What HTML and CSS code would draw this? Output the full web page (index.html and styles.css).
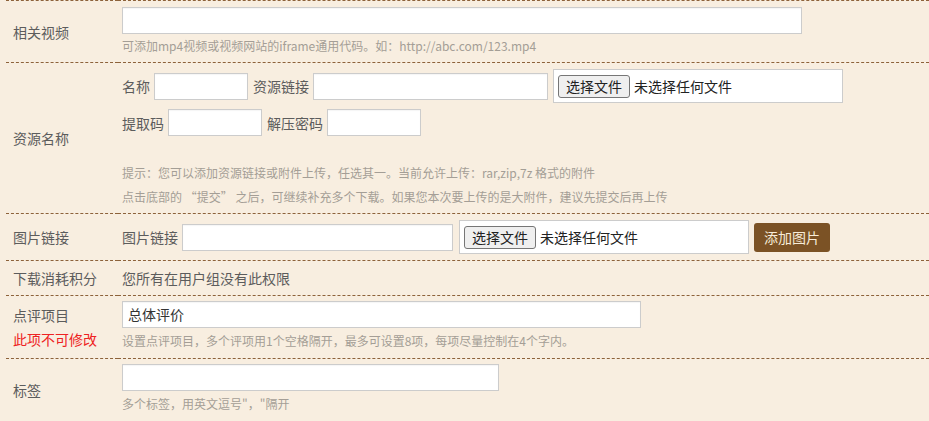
FILE: index.html
```html
<!DOCTYPE html>
<html lang="zh-CN">
<head>
<meta charset="utf-8">
<title>发布</title>
<link rel="stylesheet" href="styles.css">
</head>
<body>
<div class="form">
  <div class="row row-top"><div class="lab"></div><div class="cnt"></div></div>

  <div class="row r1">
    <div class="lab">相关视频</div>
    <div class="cnt">
      <div class="inp w680"></div>
      <div class="hint">可添加mp4视频或视频网站的iframe通用代码。如：http://abc.com/123.mp4</div>
    </div>
  </div>

  <div class="row r2">
    <div class="lab">资源名称</div>
    <div class="cnt">
      <div class="line l1">
        <span class="t">名称</span><div class="inp w94"></div>
        <span class="t sp">资源链接</span><div class="inp w235"></div>
        <div class="file sp"><span class="fbtn">选择文件</span><span class="ftxt">未选择任何文件</span></div>
      </div>
      <div class="line l2">
        <span class="t">提取码</span><div class="inp w94"></div>
        <span class="t sp5">解压密码</span><div class="inp w94"></div>
      </div>
      <div class="hint big h1">提示：您可以添加资源链接或附件上传，任选其一。当前允许上传：rar,zip,7z 格式的附件</div>
      <div class="hint big">点击底部的 “提交” 之后，可继续补充多个下载。如果您本次要上传的是大附件，建议先提交后再上传</div>
    </div>
  </div>

  <div class="row r3">
    <div class="lab">图片链接</div>
    <div class="cnt">
      <div class="line l1">
        <span class="t">图片链接</span><div class="inp w271"></div>
        <div class="file sp6"><span class="fbtn">选择文件</span><span class="ftxt">未选择任何文件</span></div>
        <span class="addbtn">添加图片</span>
      </div>
    </div>
  </div>

  <div class="row r4">
    <div class="lab">下载消耗积分</div>
    <div class="cnt"><span class="t">您所有在用户组没有此权限</span></div>
  </div>

  <div class="row r5">
    <div class="lab lab2"><span>点评项目</span><span class="red">此项不可修改</span></div>
    <div class="cnt">
      <div class="inp w519"><span class="val">总体评价</span></div>
      <div class="hint">设置点评项目，多个评项用1个空格隔开，最多可设置8项，每项尽量控制在4个字内。</div>
    </div>
  </div>

  <div class="row r6">
    <div class="lab">标签</div>
    <div class="cnt">
      <div class="inp w377"></div>
      <div class="hint">多个标签，用英文逗号"，"隔开</div>
    </div>
  </div>
</div>
</body>
</html>
```

FILE: styles.css
```css
html, body {
  margin: 0;
  padding: 0;
  background: #f8eee0;
}
body {
  font-family: "Microsoft YaHei", "Noto Sans CJK SC", "Noto Sans", sans-serif;
  font-size: 14px;
  color: #5c5c5c;
  overflow: hidden;
}
.form {
  padding-left: 6px;
}
.row {
  display: flex;
}
.lab {
  width: 112px;
  flex: none;
  box-sizing: border-box;
  padding-left: 7px;
  border-bottom: 1px dashed #8d623a;
  display: flex;
  align-items: center;
  color: #5c5c5c;
  line-height: 24px;
}
.lab2 {
  flex-direction: column;
  align-items: flex-start;
  justify-content: center;
}
.red {
  color: #ee2222;
}
.cnt {
  flex: 1;
  border-bottom: 1px dashed #8d623a;
  padding-left: 4px;
  box-sizing: border-box;
}
.row-top .lab, .row-top .cnt {
  height: 0;
}
.inp {
  height: 27px;
  box-sizing: border-box;
  background: #fff;
  border: 1px solid #cccccc;
  box-shadow: inset 0 1px 1px rgba(0,0,0,0.04);
  flex: none;
}
.w680 { width: 680px; }
.w94 { width: 94px; }
.w235 { width: 235px; }
.w271 { width: 271px; }
.w519 { width: 519px; }
.w377 { width: 377px; }
.hint {
  font-size: 12px;
  color: #a49e96;
  line-height: 16px;
  white-space: nowrap;
}
.hint.big {
  line-height: 24px;
}
.line {
  display: flex;
  align-items: center;
}
.t {
  color: #5c5c5c;
  margin-right: 4px;
  white-space: nowrap;
}
.sp { margin-left: 5px; }
.sp5 { margin-left: 5px; }
.sp6 { margin-left: 6px; }
.file {
  width: 290px;
  height: 34px;
  box-sizing: border-box;
  background: #fff;
  border: 1px solid #cccccc;
  display: flex;
  align-items: center;
  padding-left: 4px;
  flex: none;
}
.fbtn {
  height: 23px;
  box-sizing: border-box;
  padding: 0 7px;
  border: 1px solid #767676;
  border-radius: 3px;
  background: #efefef;
  color: #222;
  font-size: 14px;
  line-height: 21px;
  white-space: nowrap;
}
.ftxt {
  margin-left: 4px;
  color: #222;
  white-space: nowrap;
}
.addbtn {
  margin-left: 5px;
  height: 29px;
  width: 76px;
  box-sizing: border-box;
  background: #7b5225;
  color: #f7ecd8;
  border-radius: 3px;
  text-align: center;
  line-height: 29px;
  white-space: nowrap;
}
.val {
  display: block;
  padding-left: 5px;
  line-height: 25px;
  color: #333;
}

/* row 1 */
.r1 .cnt { padding-top: 6px; padding-bottom: 8px; }
.r1 .hint { margin-top: 4px; }
/* row 2 */
.r2 .cnt { padding-top: 6px; padding-bottom: 4px; }
.r2 .l1 { height: 34px; }
.r2 .l2 { height: 27px; margin-top: 6px; }
.r2 .h1 { margin-top: 25px; }
/* row 3 */
.r3 .cnt { padding-top: 6px; padding-bottom: 6px; }
.r3 .l1 { height: 34px; }
/* row 4 */
.r4 .cnt { height: 35px; line-height: 34px; }
.r4 .lab { height: 35px; }
/* row 5 */
.r5 .cnt { padding-top: 5px; padding-bottom: 9px; }
.r5 .hint { margin-top: 5px; }
/* row 6 */
.r6 .cnt { padding-top: 5px; padding-bottom: 9px; }
.r6 .hint { margin-top: 5px; }
```
